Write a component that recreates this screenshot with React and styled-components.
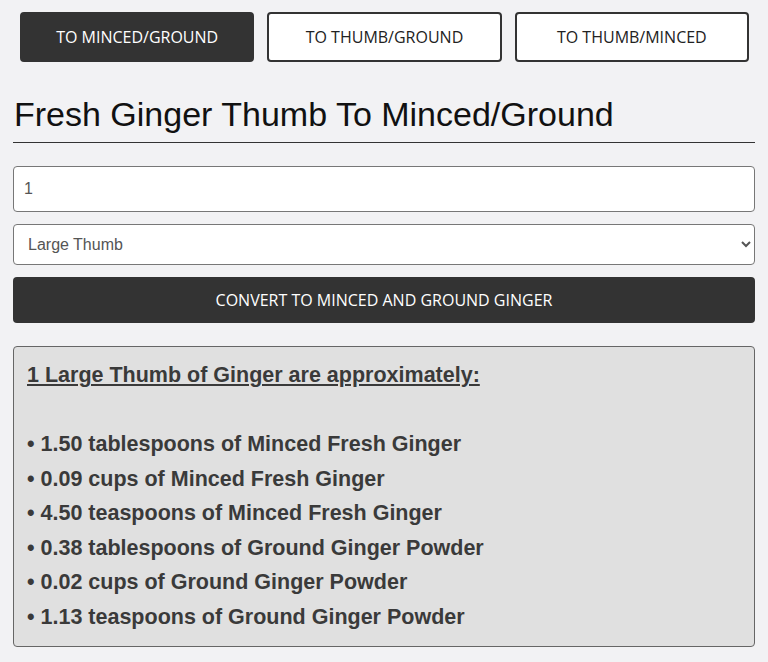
import React, { useState } from "react";
import styled, { createGlobalStyle } from "styled-components";

const Global = createGlobalStyle`
  html, body { margin: 0; padding: 0; background: #f2f2f4; }
  body { font-family: "Liberation Sans", Arial, sans-serif; }
  * { box-sizing: border-box; }
`;

const Page = styled.div`
  padding: 12px 13px 0 13px;
`;

const Tabs = styled.nav`
  display: flex;
  gap: 13px;
  padding: 0 6px 0 7px;
`;

const Tab = styled.button`
  flex: 1;
  height: 50px;
  border-radius: 4px;
  border: 2px solid #333;
  background: ${(p) => (p.$active ? "#333" : "#fff")};
  color: ${(p) => (p.$active ? "#fff" : "#222")};
  font-family: "Open Sans", sans-serif;
  font-size: 16px;
  line-height: 20px;
  padding: 0;
  text-transform: uppercase;
  cursor: pointer;
`;

const Heading = styled.h1`
  margin: 33px 0 0 0;
  padding: 0 0 8px 1px;
  font-family: "Liberation Sans", Arial, sans-serif;
  font-weight: 400;
  font-size: 34px;
  line-height: 39px;
  color: #111;
  border-bottom: 1px solid #333;
`;

const Form = styled.form`
  display: flex;
  flex-direction: column;
  gap: 12px;
  margin-top: 23px;
`;

const Input = styled.input`
  height: 46px;
  padding: 0 10px;
  border: 1px solid #777;
  border-radius: 4px;
  background: #fff;
  font-family: "Liberation Sans", Arial, sans-serif;
  font-size: 16px;
  color: #555;
  outline: none;
`;

const Select = styled.select`
  height: 41px;
  padding: 0 10px;
  border: 1px solid #777;
  border-radius: 4px;
  background: #fff;
  font-family: "Liberation Sans", Arial, sans-serif;
  font-size: 16px;
  color: #555;
  outline: none;
`;

const Convert = styled.button`
  height: 46px;
  border: none;
  border-radius: 4px;
  background: #333;
  color: #fff;
  font-family: "Open Sans", sans-serif;
  font-size: 16px;
  text-transform: uppercase;
  cursor: pointer;
`;

const Result = styled.section`
  margin-top: 23px;
  padding: 11px 13px 12px 13px;
  background: #e0e0e0;
  border: 1px solid #666;
  border-radius: 4px;
  font-family: "Liberation Sans", Arial, sans-serif;
  font-weight: 700;
  font-size: 21.5px;
  line-height: 34.5px;
  color: #3a3a3a;
`;

const ResultTitle = styled.div`
  text-decoration: underline;
  margin-bottom: 34.5px;
`;

const Line = styled.div``;

const lines = [
  "1.50 tablespoons of Minced Fresh Ginger",
  "0.09 cups of Minced Fresh Ginger",
  "4.50 teaspoons of Minced Fresh Ginger",
  "0.38 tablespoons of Ground Ginger Powder",
  "0.02 cups of Ground Ginger Powder",
  "1.13 teaspoons of Ground Ginger Powder",
];

export default function App() {
  const [qty, setQty] = useState("1");
  return (
    <Page>
      <Global />
      <Tabs>
        <Tab $active>To Minced/Ground</Tab>
        <Tab>To Thumb/Ground</Tab>
        <Tab>To Thumb/Minced</Tab>
      </Tabs>
      <Heading>Fresh Ginger Thumb To Minced/Ground</Heading>
      <Form onSubmit={(e) => e.preventDefault()}>
        <Input value={qty} onChange={(e) => setQty(e.target.value)} />
        <Select defaultValue="large">
          <option value="small">Small Thumb</option>
          <option value="medium">Medium Thumb</option>
          <option value="large">Large Thumb</option>
        </Select>
        <Convert type="submit">Convert to Minced and Ground Ginger</Convert>
      </Form>
      <Result>
        <ResultTitle>1 Large Thumb of Ginger are approximately:</ResultTitle>
        {lines.map((l) => (
          <Line key={l}>• {l}</Line>
        ))}
      </Result>
    </Page>
  );
}
